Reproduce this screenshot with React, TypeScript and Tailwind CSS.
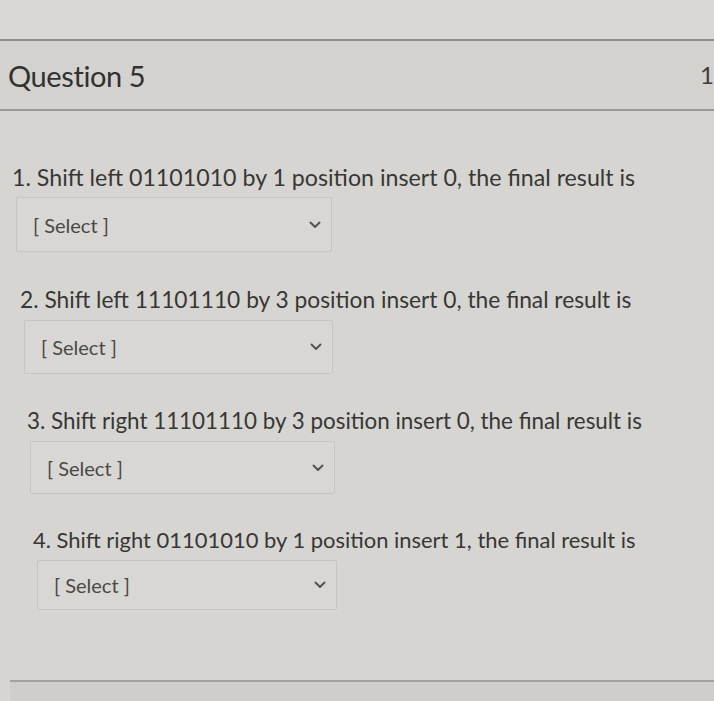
import React from "react";

const items = [
  { text: "1. Shift left 01101010 by 1 position insert 0, the final result is", ml: "ml-[12px]", mt: "mt-[54px]", fs: "text-[23.2px]", boxMl: "ml-[4px]", w: "w-[316px]", h: "h-[55px]" },
  { text: "2. Shift left 11101110 by 3 position insert 0, the final result is", ml: "ml-[20px]", mt: "mt-[36px]", fs: "text-[22.75px]", boxMl: "ml-[4px]", w: "w-[309px]", h: "h-[54px]" },
  { text: "3. Shift right 11101110 by 3 position insert 0, the final result is", ml: "ml-[27px]", mt: "mt-[35px]", fs: "text-[22.4px]", boxMl: "ml-[3px]", w: "w-[305px]", h: "h-[53px]" },
  { text: "4. Shift right 01101010 by 1 position insert 1, the final result is", ml: "ml-[33px]", mt: "mt-[34px]", fs: "text-[21.95px]", boxMl: "ml-[4px]", w: "w-[300px]", h: "h-[50px]" },
];

function Chevron() {
  return (
    <svg width="12" height="8" viewBox="0 0 12 8" fill="none">
      <path d="M1.5 1.5 L6 6 L10.5 1.5" stroke="#555" strokeWidth="2" strokeLinecap="round" strokeLinejoin="round" />
    </svg>
  );
}

export default function App() {
  return (
    <div className="w-[714px] h-[701px] overflow-hidden bg-[#d4d3d0] flex flex-col" style={{ fontFamily: "Lato, 'Noto Sans', sans-serif" }}>
      <div className="h-[41px] bg-[#d9d8d5] border-b-2 border-[#8e8d8a]" />
      <div className="h-[70px] bg-[#d3d2cf] border-b-2 border-[#9a9996] flex items-center justify-between overflow-hidden">
        <span className="ml-[8px] text-[29px] text-[#32312f] tracking-[-0.4px] leading-none">Question 5</span>
        <span className="text-[24px] text-[#3e3d3b] whitespace-nowrap w-[14px] overflow-hidden leading-none">10</span>
      </div>
      <div className="flex-1 flex flex-col bg-[#d6d5d2]">
        {items.map((it, i) => (
          <div key={i} className={`flex flex-col ${it.ml} ${it.mt}`}>
            <div className={`${it.fs} leading-[24px] text-[#383735] whitespace-nowrap`}>{it.text}</div>
            <div className={`${it.boxMl} mt-[8px] ${it.w} ${it.h} border border-[#c6c5c2] bg-[#d8d7d4] rounded-[2px] flex items-center justify-between pl-[16px] pr-[10px]`}>
              <span className="text-[20px] text-[#4a4947]">[ Select ]</span>
              <Chevron />
            </div>
          </div>
        ))}
        <div className="flex-1" />
        <div className="h-[21px] ml-[10px] border-t-2 border-[#a3a29f] bg-[#cfcecb]" />
      </div>
    </div>
  );
}
